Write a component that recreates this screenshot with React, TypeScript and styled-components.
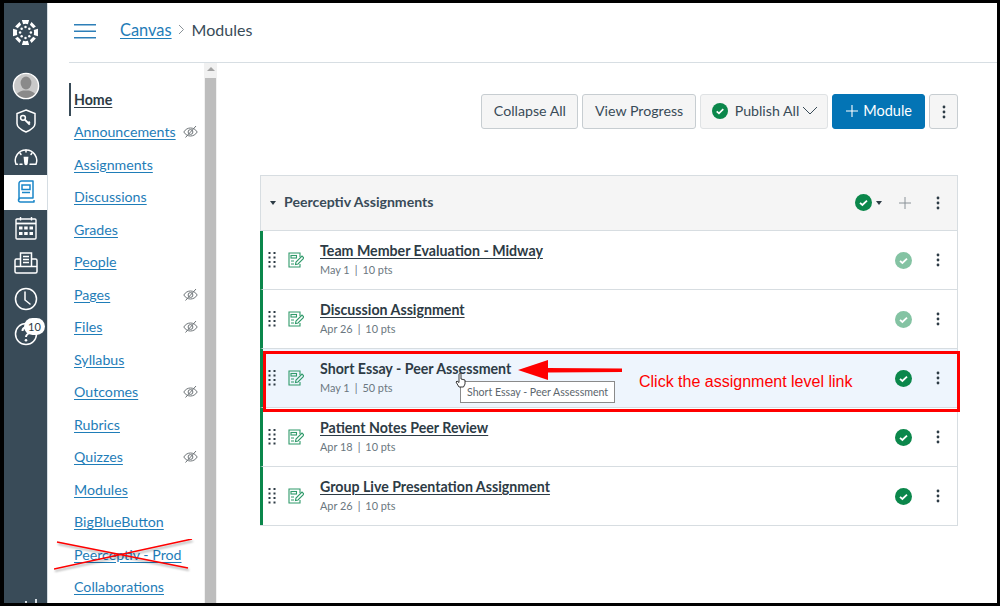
import * as React from 'react'
import styled, { createGlobalStyle } from 'styled-components'

const navItems = [
  { name: 'Home', active: true },
  { name: 'Announcements', hidden: true },
  { name: 'Assignments' },
  { name: 'Discussions' },
  { name: 'Grades' },
  { name: 'People' },
  { name: 'Pages', hidden: true },
  { name: 'Files', hidden: true },
  { name: 'Syllabus' },
  { name: 'Outcomes', hidden: true },
  { name: 'Rubrics' },
  { name: 'Quizzes', hidden: true },
  { name: 'Modules' },
  { name: 'BigBlueButton' },
  { name: 'Peerceptiv - Prod' },
  { name: 'Collaborations' },
]

const rows = [
  { title: 'Team Member Evaluation - Midway', meta: 'May 1', pts: '10 pts', faded: true },
  { title: 'Discussion Assignment', meta: 'Apr 26', pts: '10 pts', faded: true },
  { title: 'Short Essay - Peer Assessment', meta: 'May 1', pts: '50 pts', selected: true },
  { title: 'Patient Notes Peer Review', meta: 'Apr 18', pts: '10 pts' },
  { title: 'Group Live Presentation Assignment', meta: 'Apr 26', pts: '10 pts' },
]

function LogoIcon() {
  return (
    <svg width="27" height="27" viewBox="0 0 26 26" fill="#fff">
      <path d="M9.500 1h7l-1.200 4a8.500 8.500 0 0 0-4.600 0z" />
      <path d="M9.500 25h7l-1.200-4a8.500 8.500 0 0 1-4.600 0z" />
      <path d="M1 9.500v7l4-1.200a8.500 8.500 0 0 1 0-4.600z" />
      <path d="M25 9.500v7l-4-1.200a8.500 8.500 0 0 0 0-4.600z" />
      <path d="M3 7.200L7.200 3 8.800 5.500 5.500 8.800zM23 7.200L18.800 3 17.200 5.500 20.500 8.800zM3 18.800L7.200 23l1.600-2.500-3.300-3.300zM23 18.800L18.800 23l-1.600-2.500 3.300-3.300z" />
      <circle cx="13" cy="7.800" r="1.200" />
      <circle cx="13" cy="18.200" r="1.200" />
      <circle cx="7.800" cy="13" r="1.200" />
      <circle cx="18.200" cy="13" r="1.200" />
      <circle cx="9.300" cy="9.300" r="1.200" />
      <circle cx="16.700" cy="9.300" r="1.200" />
      <circle cx="9.300" cy="16.700" r="1.200" />
      <circle cx="16.700" cy="16.700" r="1.200" />
    </svg>
  )
}

function AvatarIcon() {
  return (
    <svg width="28" height="28" viewBox="0 0 28 28">
      <clipPath id="avatarClip"><circle cx="14" cy="14" r="12.6" /></clipPath>
      <circle cx="14" cy="14" r="12.6" fill="#c9c9c9" />
      <g clipPath="url(#avatarClip)" fill="#8a8a8a">
        <ellipse cx="14" cy="11" rx="5.400" ry="6.400" />
        <path d="M3 28c0-6 4-8.500 8-9.500h6c4 1 8 3.500 8 9.500z" />
      </g>
      <circle cx="14" cy="14" r="12.6" fill="none" stroke="#fff" strokeWidth="1.4" />
    </svg>
  )
}

function ShieldIcon() {
  return (
    <svg width="22" height="24" viewBox="0 0 22 24" fill="none" stroke="#fff" strokeWidth="1.5">
      <path d="M11 1l9 3.500v10c0 3.500-5 6.800-9 8.500-4-1.700-9-5-9-8.500v-10z" />
      <circle cx="8" cy="8.800" r="2.400" />
      <path d="M9.800 10.600l5 5M13.300 14.100l1.500-1.500" strokeWidth="2" />
    </svg>
  )
}

function GaugeIcon() {
  return (
    <svg width="24" height="18" viewBox="0 0 24 18" fill="none" stroke="#fff" strokeWidth="1.5" strokeLinecap="round">
      <path d="M3.500 16.300H2A10.500 10.500 0 0 1 12 2a10.500 10.500 0 0 1 10 14.300h-6M8 16.300H6" />
      <path d="M12 2v2M6 5l1 1.500M18 5l-1 1.500" />
      <path d="M10.400 9.500h3.200L13 15.500a1 1 0 0 1-2 0z" fill="#fff" />
    </svg>
  )
}

function BookIcon() {
  return (
    <svg width="20" height="24" viewBox="0 0 20 24" fill="none" stroke="#1b87c9" strokeWidth="1.5">
      <path d="M3 20V3.500A2.500 2.500 0 0 1 5.500 1H17v17H4.500A2 2 0 0 0 2.500 20a2 2 0 0 0 2 2H18v-2" strokeLinejoin="round" />
      <rect x="6" y="5" width="8" height="4.500" />
      <path d="M6 12.500h8" />
    </svg>
  )
}

function CalendarIcon() {
  return (
    <svg width="22" height="24" viewBox="0 0 22 24" fill="none" stroke="#fff" strokeWidth="1.4">
      <rect x="1" y="3" width="20" height="20" rx="1" />
      <path d="M1 7.500h20" strokeWidth="1.800" />
      <path d="M5.500 1v3.500M16.500 1v3.500" />
      <g fill="#fff" stroke="none">
        <rect x="4" y="10.500" width="3.500" height="3" />
        <rect x="9.200" y="10.500" width="3.500" height="3" />
        <rect x="14.500" y="10.500" width="3.500" height="3" />
        <rect x="4" y="16" width="3.500" height="3" />
        <rect x="9.200" y="16" width="3.500" height="3" />
        <rect x="14.500" y="16" width="3.500" height="3" />
      </g>
    </svg>
  )
}

function InboxIcon() {
  return (
    <svg width="24" height="24" viewBox="0 0 24 24" fill="none" stroke="#fff" strokeWidth="1.5">
      <path d="M6.500 15V2h11v13" />
      <path d="M9 5.500h6M9 8.500h6M9 11.500h6" />
      <path d="M6.500 8H2.500A1.500 1.500 0 0 0 1 9.500v11A1.500 1.500 0 0 0 2.500 22h19a1.500 1.500 0 0 0 1.500-1.500v-11A1.500 1.500 0 0 0 21.500 8h-4" />
      <path d="M1 15.500h22" />
    </svg>
  )
}

function ClockIcon() {
  return (
    <svg width="24" height="24" viewBox="0 0 24 24" fill="none" stroke="#fff" strokeWidth="1.5">
      <circle cx="12" cy="12" r="10.500" />
      <path d="M11 5v8l5 4" strokeLinecap="round" />
    </svg>
  )
}

function HelpIcon() {
  return (
    <svg width="24" height="24" viewBox="0 0 24 24" fill="none" stroke="#fff" strokeWidth="1.5">
      <circle cx="12" cy="12" r="10.500" />
      <path d="M8.500 9a3.500 3.500 0 1 1 5.200 3c-1.100.7-1.700 1.300-1.700 3" strokeWidth="2" />
      <circle cx="12" cy="18.300" r="1.300" fill="#fff" stroke="none" />
    </svg>
  )
}

function HamburgerIcon() {
  return (
    <svg width="22" height="15" viewBox="0 0 22 15" fill="#2d7fb8">
      <rect y="0" width="22" height="1.500" />
      <rect y="6.500" width="22" height="1.500" />
      <rect y="13" width="22" height="1.500" />
    </svg>
  )
}

function EyeOffIcon() {
  return (
    <svg width="15" height="13" viewBox="0 0 15 13" fill="none" stroke="#6e7478" strokeWidth="1">
      <path d="M.8 7C2.500 4.200 5 3 7.500 3s5 1.200 6.700 4c-1.700 2.800-4.200 4-6.700 4S2.500 9.800.8 7z" />
      <circle cx="7.500" cy="7" r="2.400" />
      <path d="M2.500 12.500L13 1" />
    </svg>
  )
}

function CheckBadge({ size = 17, color = '#0b874b' }: { size?: number; color?: string }) {
  return (
    <svg width={size} height={size} viewBox="0 0 17 17">
      <circle cx="8.500" cy="8.500" r="8.500" fill={color} />
      <path d="M5 8.800l2.400 2.200L12 6.600" fill="none" stroke="#fff" strokeWidth="1.800" />
    </svg>
  )
}

function Kebab() {
  return (
    <svg width="4" height="14" viewBox="0 0 4 14" fill="#2d3b45">
      <circle cx="2" cy="2" r="1.400" />
      <circle cx="2" cy="7" r="1.400" />
      <circle cx="2" cy="12" r="1.400" />
    </svg>
  )
}

function DragHandle() {
  return (
    <svg width="8" height="16" viewBox="0 0 8 16" fill="#2d3b45">
      {[1, 5.500, 10, 14.500].map((y) => (
        <React.Fragment key={y}>
          <rect x="0.500" y={y - 1} width="2" height="2" />
          <rect x="5.500" y={y - 1} width="2" height="2" />
        </React.Fragment>
      ))}
    </svg>
  )
}

function AssignmentIcon() {
  return (
    <svg width="16" height="16" viewBox="0 0 16 16" fill="none" stroke="#2f9a6a" strokeWidth="1.100">
      <path d="M12 5V1H1v14h11v-3" />
      <rect x="3" y="3.500" width="5.500" height="2.500" />
      <path d="M3 9h3M3 12h3" />
      <path d="M7.500 12.500l.5-2.500 6-6 2 2-6 6z" />
    </svg>
  )
}

function App() {
  return (
    <>
      <GlobalStyle />
      <Frame>
        <Rail>
          <RailLogo><LogoIcon /></RailLogo>
          <RailItem><AvatarIcon /></RailItem>
          <RailItem><ShieldIcon /></RailItem>
          <RailItem><GaugeIcon /></RailItem>
          <RailItem $active><BookIcon /></RailItem>
          <RailItem><CalendarIcon /></RailItem>
          <RailItem><InboxIcon /></RailItem>
          <RailItem><ClockIcon /></RailItem>
          <RailItem>
            <HelpIcon />
            <Badge>10</Badge>
          </RailItem>
          <RailFoot>
            <RailMark />
            <RailMark $tall />
          </RailFoot>
        </Rail>
        <Main>
          <Header>
            <HamburgerIcon />
            <Crumbs>
              <CrumbLink>Canvas</CrumbLink>
              <CrumbSep>
                <svg width="7" height="11" viewBox="0 0 7 11" fill="none" stroke="#8a9298" strokeWidth="1">
                  <path d="M1 1l4.500 4.500L1 10" />
                </svg>
              </CrumbSep>
              <span>Modules</span>
            </Crumbs>
          </Header>
          <Body>
            <CourseNav>
              {navItems.map((item) => (
                <NavRow key={item.name} $active={item.active}>
                  <NavLink $active={item.active}>{item.name}</NavLink>
                  {item.hidden && <EyeOffIcon />}
                </NavRow>
              ))}
              <CrossOut viewBox="0 0 145 34" width="145" height="34">
                <path d="M3 3l131 26M0 30L138 0" stroke="#f00" strokeWidth="1.500" />
              </CrossOut>
            </CourseNav>
            <ScrollBar>
              <ScrollArrow />
              <ScrollThumb />
            </ScrollBar>
            <Content>
              <Toolbar>
                <Button>Collapse All</Button>
                <Button>View Progress</Button>
                <PublishButton>
                  <CheckBadge size={16} />
                  Publish All
                  <Chevron viewBox="0 0 16 9" width="16" height="9">
                    <path d="M1 1l7 7 7-7" />
                  </Chevron>
                </PublishButton>
                <PrimaryButton>
                  <svg width="12" height="12" viewBox="0 0 12 12" stroke="#fff" strokeWidth="1.100">
                    <path d="M6 0v12M0 6h12" />
                  </svg>
                  Module
                </PrimaryButton>
                <KebabButton><Kebab /></KebabButton>
              </Toolbar>
              <Module>
                <ModuleHead>
                  <Caret />
                  <ModuleTitle>Peerceptiv Assignments</ModuleTitle>
                  <ModuleActions>
                    <CheckBadge size={17} />
                    <SmallCaret />
                    <svg width="12" height="12" viewBox="0 0 12 12" stroke="#8a9298" strokeWidth="1">
                      <path d="M6 0v12M0 6h12" />
                    </svg>
                    <KebabSlot $offset={8}><Kebab /></KebabSlot>
                  </ModuleActions>
                </ModuleHead>
                {rows.map((row) => (
                  <Row key={row.title} $selected={row.selected}>
                    <DragHandle />
                    <AssignmentIcon />
                    <RowText>
                      <RowTitle $selected={row.selected}>{row.title}</RowTitle>
                      <RowMeta>
                        {row.meta}<MetaSep>|</MetaSep>{row.pts}
                      </RowMeta>
                    </RowText>
                    <CheckBadge color={row.faded ? '#84c3a3' : '#0b874b'} />
                    <KebabSlot $offset={-5}><Kebab /></KebabSlot>
                  </Row>
                ))}
              </Module>
            </Content>
          </Body>
        </Main>
        <Highlight />
        <Arrow viewBox="0 0 104 20" width="104" height="20">
          <path d="M0 10L30 0v8l74 .5v3.500l-74 .5V20z" fill="#f00" />
        </Arrow>
        <Callout>Click the assignment level link</Callout>
        <Tip>Short Essay - Peer Assessment</Tip>
        <Pointer viewBox="0 0 12 15" width="12" height="15">
          <path d="M4 1.500a1 1 0 0 1 2 0V6l4 1v4l-1.500 3H4L1 9l1-1 2 1.500z" fill="#fff" stroke="#222" strokeWidth=".9" />
        </Pointer>
      </Frame>
    </>
  )
}

const GlobalStyle = createGlobalStyle`
  html, body {
    margin: 0;
    padding: 0;
    background: #fff;
  }
  body {
    font-family: Lato, "Open Sans", sans-serif;
    color: #2d3b45;
  }
`

const Frame = styled.div`
  position: relative;
  box-sizing: border-box;
  width: 1000px;
  height: 606px;
  overflow: hidden;
  display: flex;
  background: #fff;
  border-style: solid;
  border-color: #000;
  border-width: 3px 3px 3px 4px;
`

const Rail = styled.nav`
  flex: 0 0 43px;
  background: #394b58;
  display: flex;
  flex-direction: column;
  align-items: stretch;
  padding-top: 11px;
  border-right: 1px solid #d5dde3;
`

const RailLogo = styled.div`
  height: 36px;
  margin-bottom: 18px;
  display: flex;
  align-items: center;
  justify-content: center;
`

const RailItem = styled.div<{ $active?: boolean }>`
  position: relative;
  height: 35.5px;
  display: flex;
  align-items: center;
  justify-content: center;
  background: ${(props) => (props.$active ? '#fff' : 'transparent')};
`

const RailFoot = styled.div`
  margin-top: auto;
  height: 4px;
  padding-left: 21px;
  display: flex;
  align-items: flex-end;
  gap: 8px;
`

const RailMark = styled.span<{ $tall?: boolean }>`
  width: 2px;
  height: ${(props) => (props.$tall ? '4px' : '2px')};
  background: #d5dde3;
`

const Badge = styled.span`
  position: absolute;
  top: 1px;
  left: 20px;
  width: 21px;
  height: 17px;
  border-radius: 9px;
  background: #fff;
  color: #2d3b45;
  font-size: 11px;
  line-height: 17px;
  text-align: center;
`

const Main = styled.div`
  flex: 1;
  min-width: 0;
  display: flex;
  flex-direction: column;
`

const Header = styled.header`
  height: 60px;
  flex: none;
  box-sizing: border-box;
  margin-left: 21px;
  padding: 0 0 2px 5px;
  display: flex;
  align-items: center;
  gap: 24px;
  border-bottom: 1px solid #d7dee3;
`

const Crumbs = styled.div`
  display: flex;
  align-items: center;
  margin-bottom: 4px;
  font-size: 16px;
  color: #394b58;
`

const CrumbLink = styled.a`
  color: #1f7db8;
  font-size: 16.4px;
  text-decoration: underline;
  text-underline-offset: 2px;
`

const CrumbSep = styled.span`
  display: flex;
  margin: 0 7px 0 6px;
`

const Body = styled.div`
  flex: 1;
  min-height: 0;
  display: flex;
`

const CourseNav = styled.div`
  position: relative;
  flex: 0 0 135px;
  margin-left: 21px;
  padding-top: 20px;
  box-sizing: border-box;
`

const NavRow = styled.div<{ $active?: boolean }>`
  height: 32.5px;
  box-sizing: border-box;
  padding: 0 6px 0 ${(props) => (props.$active ? '3px' : '5px')};
  display: flex;
  align-items: center;
  justify-content: space-between;
  border-left: ${(props) => (props.$active ? '2px solid #394b58' : 'none')};
`

const NavLink = styled.a<{ $active?: boolean }>`
  font-size: 14.2px;
  font-weight: ${(props) => (props.$active ? 700 : 400)};
  color: ${(props) => (props.$active ? '#2d3b45' : '#1f7db8')};
  text-decoration: underline;
  text-underline-offset: 2px;
`

const CrossOut = styled.svg`
  position: absolute;
  top: 476px;
  left: -15px;
  filter: drop-shadow(1px 2px 1px rgba(0, 0, 0, 0.35));
`

const ScrollBar = styled.div`
  flex: 0 0 13px;
  background: #f1f1f1;
  display: flex;
  flex-direction: column;
`

const ScrollArrow = styled.div`
  flex: 0 0 15px;
  position: relative;
  &::after {
    content: '';
    position: absolute;
    left: 3px;
    top: 4px;
    border: 4px solid transparent;
    border-top: none;
    border-bottom: 4px solid #a3a3a3;
  }
`

const ScrollThumb = styled.div`
  flex: 1;
  margin: 0 1px;
  background: #bdbdbd;
`

const Content = styled.main`
  flex: 1;
  min-width: 0;
  padding: 31px 39px 0 43px;
`

const Toolbar = styled.div`
  display: flex;
  justify-content: flex-end;
  gap: 4px;
  height: 35px;
  margin-bottom: 46px;
`

const Button = styled.button`
  font-family: Lato, sans-serif;
  font-size: 14.2px;
  color: #394b58;
  background: #f5f5f5;
  border: 1px solid #c7cdd1;
  border-radius: 3px;
  padding: 0 11.5px 2px;
  display: flex;
  align-items: center;
`

const PublishButton = styled(Button)`
  gap: 7px;
  padding: 0 9px 2px 11px;
  border-color: #dfe2e4;
`

const Chevron = styled.svg`
  margin-left: -4px;
  fill: none;
  stroke: #394b58;
  stroke-width: 1;
`

const PrimaryButton = styled(Button)`
  background: #0374b5;
  border-color: #0374b5;
  color: #fff;
  font-size: 14.5px;
  gap: 5px;
  padding: 0 12px 2px 13px;
`

const KebabButton = styled(Button)`
  width: 29px;
  padding: 0;
  justify-content: center;
`

const Module = styled.section`
  border: 1px solid #d7dde1;
  border-left: none;
`

const ModuleHead = styled.div`
  height: 55px;
  box-sizing: border-box;
  background: #f5f5f5;
  display: flex;
  align-items: center;
  padding: 0 0 1px 9px;
  border-left: 1px solid #d7dde1;
  border-bottom: 1px solid #d7dde1;
`

const Caret = styled.span`
  border: 3.5px solid transparent;
  border-top: 4.5px solid #2d3b45;
  border-bottom: none;
  margin-right: 8px;
`

const ModuleTitle = styled.h2`
  flex: 1;
  margin: 0 0 2px;
  font-size: 14.1px;
  font-weight: 700;
  color: #394b58;
`

const ModuleActions = styled.div`
  display: flex;
  align-items: center;
`

const SmallCaret = styled(Caret)`
  margin: 0 17px 0 4px;
`

const KebabSlot = styled.span<{ $offset: number }>`
  width: 38px;
  display: flex;
  justify-content: center;
  line-height: 0;
  margin-left: ${(props) => props.$offset}px;
`

const Row = styled.div<{ $selected?: boolean }>`
  height: 59px;
  box-sizing: border-box;
  display: flex;
  align-items: center;
  gap: 12px;
  padding-left: 5px;
  border-left: 3px solid #0b874b;
  border-bottom: 1px solid #d7dde1;
  background: ${(props) => (props.$selected ? '#eef5fd' : '#fff')};
  &:last-child {
    height: 58px;
    border-bottom: none;
  }
`

const RowText = styled.div`
  flex: 1;
  margin-left: 4px;
  padding-bottom: 3px;
`

const RowTitle = styled.a<{ $selected?: boolean }>`
  display: block;
  width: max-content;
  font-size: 14.2px;
  font-weight: 700;
  color: #2d3b45;
  text-decoration: ${(props) => (props.$selected ? 'none' : 'underline')};
  text-underline-offset: 2px;
`

const RowMeta = styled.div`
  margin-top: 4px;
  font-size: 10.9px;
  color: #6b7780;
`

const MetaSep = styled.span`
  margin: 0 5px;
`

const Highlight = styled.div`
  position: absolute;
  left: 259px;
  top: 348px;
  width: 697px;
  height: 61px;
  box-sizing: border-box;
  border: 3px solid #f00;
  pointer-events: none;
`

const Arrow = styled.svg`
  position: absolute;
  left: 514px;
  top: 357px;
`

const Callout = styled.div`
  position: absolute;
  left: 635px;
  top: 370px;
  font-family: "Liberation Sans", Arial, sans-serif;
  font-size: 16px;
  color: #f00;
`

const Tip = styled.div`
  position: absolute;
  left: 456px;
  top: 378px;
  height: 22px;
  box-sizing: border-box;
  padding: 0 6px;
  display: flex;
  align-items: center;
  background: #fff;
  border: 1px solid #8a8a8a;
  font-size: 10.6px;
  color: #5c666d;
`

const Pointer = styled.svg`
  position: absolute;
  left: 451px;
  top: 370px;
`

export default App
